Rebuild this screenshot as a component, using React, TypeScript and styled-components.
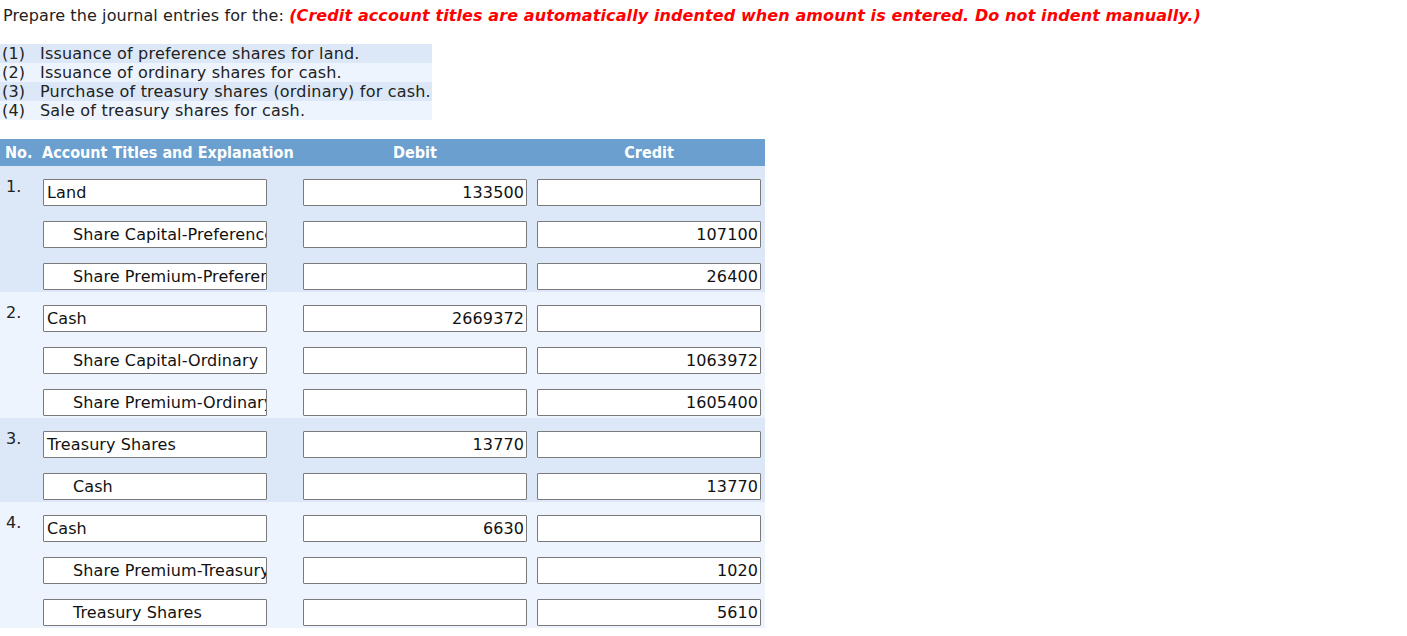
import React from "react";
import styled, { createGlobalStyle } from "styled-components";

const Global = createGlobalStyle`
  body {
    margin: 0;
    background: #ffffff;
    font-family: Verdana, "DejaVu Sans", sans-serif;
    color: #000;
  }
`;

const Page = styled.div`
  padding: 6px 0 0 0;
  width: 1407px;
`;

const Prompt = styled.div`
  font-size: 16px;
  line-height: 20px;
  padding-left: 3px;
  letter-spacing: 0.1px;
  color: #222;
`;

const Note = styled.span`
  color: #ff0000;
  font-weight: bold;
  font-style: italic;
`;

const List = styled.div`
  margin-top: 18px;
  width: 432px;
  display: flex;
  flex-direction: column;
`;

const ListRow = styled.div<{ $dark: boolean }>`
  display: grid;
  grid-template-columns: 38px 1fr;
  height: 19px;
  line-height: 19px;
  font-size: 16px;
  letter-spacing: 0.2px;
  padding-left: 2px;
  color: #222;
  background: ${(p) => (p.$dark ? "#dce8f8" : "#edf4fd")};
`;

const Table = styled.div`
  margin-top: 19px;
  width: 765px;
  display: flex;
  flex-direction: column;
`;

const cols = "43px 224px 36px 224px 10px 224px 4px";

const Header = styled.div`
  display: grid;
  grid-template-columns: ${cols};
  height: 27px;
  align-items: center;
  background: #6a9fcf;
  color: #ffffff;
  font-family: Tahoma, "DejaVu Sans Condensed", "DejaVu Sans", sans-serif;
  font-weight: bold;
  font-size: 16px;
`;

const HeadNo = styled.div`
  padding-left: 5px;
`;

const HeadTitle = styled.div`
  grid-column: 2 / 4;
  white-space: nowrap;
  margin-left: -1px;
`;

const HeadAmount = styled.div`
  text-align: center;
`;

const Group = styled.div<{ $dark: boolean }>`
  background: ${(p) => (p.$dark ? "#dce8f8" : "#edf4fd")};
  display: flex;
  flex-direction: column;
`;

const Row = styled.div`
  display: grid;
  grid-template-columns: ${cols};
  height: 42px;
  align-items: start;
  padding-top: 13px;
  box-sizing: border-box;
`;

const Num = styled.div`
  font-size: 16px;
  line-height: 18px;
  padding-left: 6px;
  margin-top: -1px;
  color: #222;
`;

const Field = styled.div<{ $indent?: boolean; $right?: boolean }>`
  box-sizing: border-box;
  height: 27px;
  width: 224px;
  background: #ffffff;
  border: 1px solid #7a7a7a;
  border-radius: 1px;
  font-size: 16px;
  line-height: 25px;
  letter-spacing: 0.1px;
  color: #111;
  white-space: nowrap;
  overflow: hidden;
  text-align: ${(p) => (p.$right ? "right" : "left")};
  padding-left: ${(p) => (p.$indent ? "29px" : "3px")};
  padding-right: 2px;
`;

const Spacer = styled.div``;

type Line = { account: string; debit?: string; credit?: string };
type Entry = { no: string; lines: Line[] };

const entries: Entry[] = [
  {
    no: "1.",
    lines: [
      { account: "Land", debit: "133500" },
      { account: "Share Capital-Preference", credit: "107100" },
      { account: "Share Premium-Preference", credit: "26400" },
    ],
  },
  {
    no: "2.",
    lines: [
      { account: "Cash", debit: "2669372" },
      { account: "Share Capital-Ordinary", credit: "1063972" },
      { account: "Share Premium-Ordinary", credit: "1605400" },
    ],
  },
  {
    no: "3.",
    lines: [
      { account: "Treasury Shares", debit: "13770" },
      { account: "Cash", credit: "13770" },
    ],
  },
  {
    no: "4.",
    lines: [
      { account: "Cash", debit: "6630" },
      { account: "Share Premium-Treasury", credit: "1020" },
      { account: "Treasury Shares", credit: "5610" },
    ],
  },
];

const items = [
  "Issuance of preference shares for land.",
  "Issuance of ordinary shares for cash.",
  "Purchase of treasury shares (ordinary) for cash.",
  "Sale of treasury shares for cash.",
];

export default function App() {
  return (
    <Page>
      <Global />
      <Prompt>
        Prepare the journal entries for the:{" "}
        <Note>
          (Credit account titles are automatically indented when amount is
          entered. Do not indent manually.)
        </Note>
      </Prompt>
      <List>
        {items.map((t, i) => (
          <ListRow key={i} $dark={i % 2 === 0}>
            <span>({i + 1})</span>
            <span>{t}</span>
          </ListRow>
        ))}
      </List>
      <Table>
        <Header>
          <HeadNo>No.</HeadNo>
          <HeadTitle>Account Titles and Explanation</HeadTitle>
          <HeadAmount>Debit</HeadAmount>
          <Spacer />
          <HeadAmount>Credit</HeadAmount>
          <Spacer />
        </Header>
        {entries.map((e, gi) => (
          <Group key={e.no} $dark={gi % 2 === 0}>
            {e.lines.map((l, li) => (
              <Row key={li}>
                <Num>{li === 0 ? e.no : ""}</Num>
                <Field $indent={!!l.credit}>{l.account}</Field>
                <Spacer />
                <Field $right>{l.debit ?? ""}</Field>
                <Spacer />
                <Field $right>{l.credit ?? ""}</Field>
                <Spacer />
              </Row>
            ))}
          </Group>
        ))}
      </Table>
    </Page>
  );
}
